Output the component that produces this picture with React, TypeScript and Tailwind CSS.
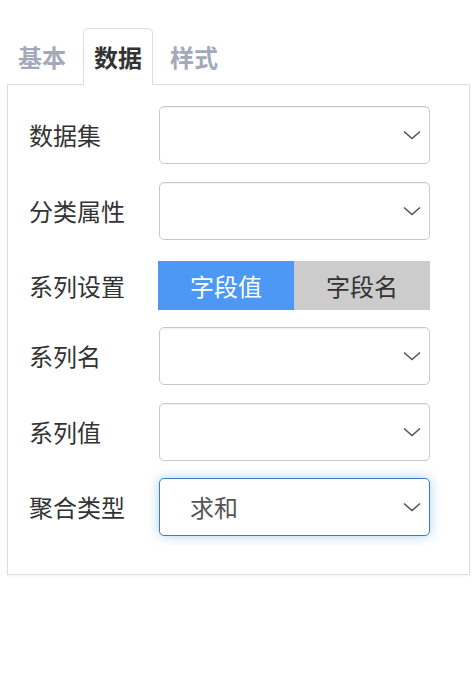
import { useState } from 'react'

const font = { fontFamily: '"Noto Sans CJK SC", "Noto Sans", sans-serif' }

function Chevron() {
  return (
    <svg width="18" height="10" viewBox="0 0 18 10" fill="none" className="shrink-0">
      <path d="M1 1.5 L9 8.5 L17 1.5" stroke="#555" strokeWidth="1.6" />
    </svg>
  )
}

function Select({ value, focused }: { value?: string; focused?: boolean }) {
  return (
    <div
      className={`w-[271px] h-[58px] rounded-[5px] bg-white flex items-center justify-between pl-[30px] pr-[8px] border-[1.5px] ${
        focused
          ? 'border-[#3f7cbd] shadow-[0_0_12px_rgba(102,175,233,0.55)]'
          : 'border-[#c9c9c9] shadow-[inset_0_1px_1px_rgba(0,0,0,0.06)]'
      }`}
    >
      <span className="text-[24px] text-[#555] leading-none">{value}</span>
      <Chevron />
    </div>
  )
}

export default function App() {
  const [tab, setTab] = useState('数据')
  const [mode, setMode] = useState('字段值')

  const Row = ({ label, children, className }: { label: string; children: React.ReactNode; className?: string }) => (
    <div className={`flex items-center ${className ?? ''}`}>
      <div className="w-[130px] text-[24px] text-[#333] leading-none">{label}</div>
      {children}
    </div>
  )

  return (
    <div className="w-[474px] h-[683px] bg-white pt-[28px]" style={font}>
      {/* Tabs */}
      <div className="flex gap-[6px] pl-[7px] h-[57px] relative z-10">
        {['基本', '数据', '样式'].map((t) => {
          const active = t === tab
          return (
            <button
              key={t}
              onClick={() => setTab(t)}
              className={`w-[70px] h-[57px] flex items-center justify-center text-[24px] font-bold rounded-t-[5px] border ${
                active
                  ? 'border-[#dcdcdc] border-b-white bg-white text-[#333]'
                  : 'border-transparent text-[#a3a9b8]'
              }`}
            >
              {t}
            </button>
          )
        })}
      </div>

      {/* Panel */}
      <div className="ml-[7px] w-[463px] h-[491px] -mt-px border border-[#dedede] shadow-[0_1px_2px_rgba(0,0,0,0.05)] pl-[21px] pt-[21px]">
        <Row label="数据集">
          <Select />
        </Row>
        <Row label="分类属性" className="mt-[18px]">
          <Select />
        </Row>
        <Row label="系列设置" className="mt-[21px]">
          <div className="flex w-[272px] h-[49px] -ml-px">
            {['字段值', '字段名'].map((m) => (
              <button
                key={m}
                onClick={() => setMode(m)}
                className={`flex-1 flex items-center justify-center text-[24px] leading-none ${
                  mode === m ? 'bg-[#4d98f4] text-white' : 'bg-[#cccccc] text-[#333]'
                }`}
              >
                {m}
              </button>
            ))}
          </div>
        </Row>
        <Row label="系列名" className="mt-[17px]">
          <Select />
        </Row>
        <Row label="系列值" className="mt-[18px]">
          <Select />
        </Row>
        <Row label="聚合类型" className="mt-[17px]">
          <Select value="求和" focused />
        </Row>
      </div>
    </div>
  )
}
